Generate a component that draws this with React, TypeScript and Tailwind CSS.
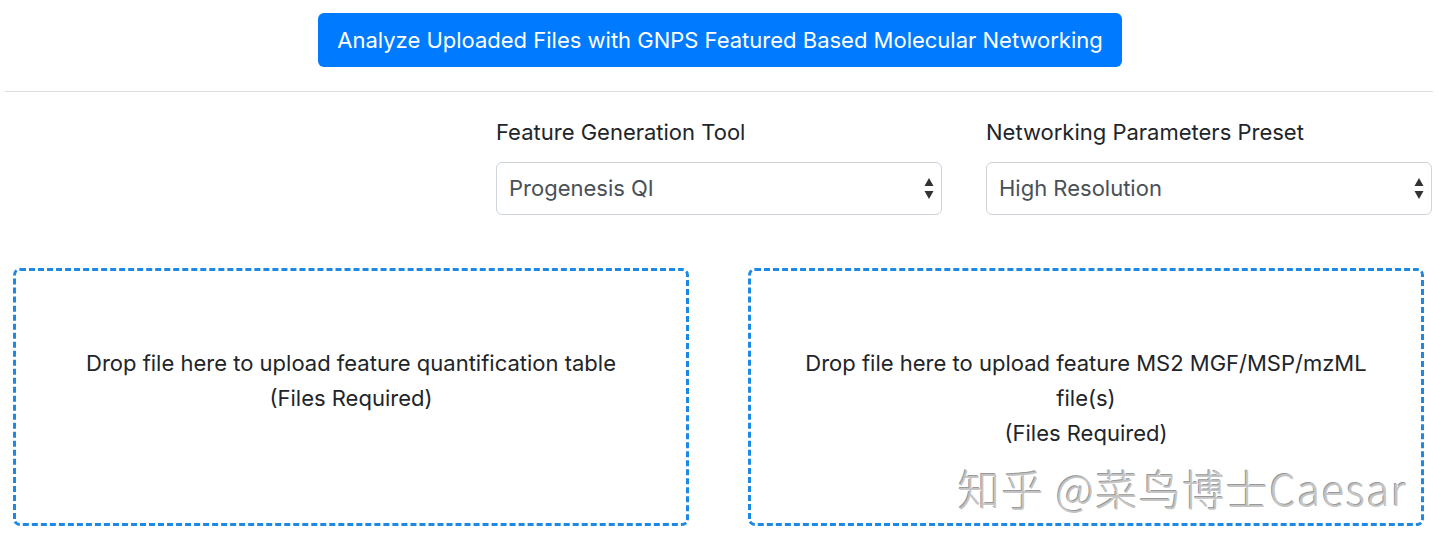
import React from "react";

const font = { fontFamily: '"Inter", "Liberation Sans", sans-serif' };

const SelectBox = ({ label, value }: { label: string; value: string }) => {
  return (
    <div className="flex w-[446px] flex-col">
      <label className="text-[22px] leading-[33px] text-[#212529]">{label}</label>
      <div className="mt-[13px] flex h-[53px] items-center justify-between rounded-[6px] border border-[#ced4da] bg-white pl-[12px] pr-[6px]">
        <span className="text-[22px] text-[#495057]">{value}</span>
        <svg width="10" height="24" viewBox="0 0 10 24" className="mr-[1px]">
          <path d="M5 1 L9.5 9 H0.5 Z" fill="#333" />
          <path d="M0.5 14 H9.5 L5 22 Z" fill="#333" />
        </svg>
      </div>
    </div>
  );
};

const DropZone = ({ lines }: { lines: string[] }) => {
  return (
    <div className="h-[258px] w-[676px] rounded-[7px] border-[3px] border-dashed border-[#1e88e5] px-[50px] pt-[75px] text-center text-[22px] leading-[35px] text-[#212529]">
      {lines.map((l) => (
        <div key={l}>{l}</div>
      ))}
    </div>
  );
};

export default function App() {
  return (
    <div className="relative h-[547px] w-[1440px] overflow-hidden bg-white" style={font}>
      <div className="flex justify-center pt-[13px]">
        <button className="h-[54px] rounded-[6px] bg-[#007bff] px-[19px] text-[22px] text-white">
          Analyze Uploaded Files with GNPS Featured Based Molecular Networking
        </button>
      </div>
      <hr className="mx-[5px] mt-[24px] w-[1428px] border-t border-[#dedede]" />

      <div className="mt-[24px] flex gap-[44px] pl-[496px]">
        <SelectBox label="Feature Generation Tool" value="Progenesis QI" />
        <SelectBox label="Networking Parameters Preset" value="High Resolution" />
      </div>

      <div className="mt-[53px] flex gap-[59px] pl-[13px]">
        <DropZone lines={["Drop file here to upload feature quantification table", "(Files Required)"]} />
        <DropZone
          lines={["Drop file here to upload feature MS2 MGF/MSP/mzML file(s)", "(Files Required)"]}
        />
      </div>

      <div
        className="absolute left-[958px] top-[462px] text-[42px] font-light leading-[52px] tracking-[1.5px] text-[#c4c4c4]"
        style={{ fontFamily: '"Noto Sans CJK SC", "Liberation Sans", sans-serif', textShadow: "1px 1px 0 #fff, -1px -1px 0 #999" }}
      >
        知乎 @菜鸟博士Caesar
      </div>
    </div>
  );
}
